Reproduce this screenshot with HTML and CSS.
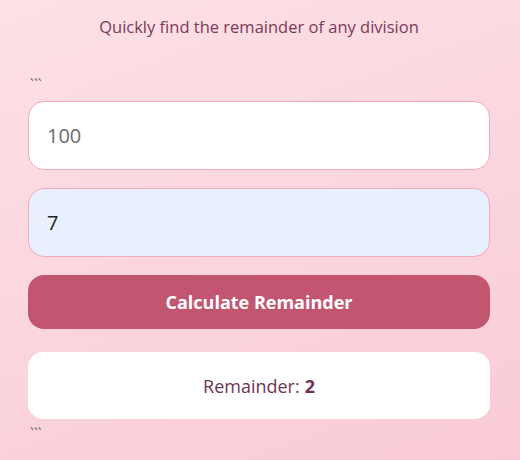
FILE: index.html
```html
<!DOCTYPE html>
<html lang="en">
<head>
  <meta charset="UTF-8">
  <meta name="viewport" content="width=device-width, initial-scale=1.0">
  <title>Remainder Calculator</title>
  <link rel="stylesheet" href="styles.css">
</head>
<body>
  <p class="subtitle">Quickly find the remainder of any division</p>

  <div class="fence">```</div>

  <form class="calc" id="calcForm">
    <input type="text" class="field" id="dividend" placeholder="100">
    <input type="text" class="field filled" id="divisor" value="7">
    <button type="submit" class="calc-button">Calculate Remainder</button>
  </form>

  <div class="result">Remainder: <strong>2</strong></div>

  <div class="fence">```</div>
</body>
</html>
```

FILE: styles.css
```css
html {
  min-height: 100%;
  background: linear-gradient(160deg, #fde1e7 0%, #f9cbd6 100%);
}
body {
  font-family: "Open Sans", "Noto Sans", Arial, sans-serif;
  margin: 0;
  padding: 14px 30px 0 28px;
  color: #7a3855;
}
.subtitle {
  margin: 0;
  text-align: center;
  font-size: 16.5px;
  line-height: 26px;
  color: #7d3a58;
}
.fence {
  margin: 37px 0 0 2px;
  font-size: 14px;
  line-height: 16px;
  height: 16px;
  color: #555;
}
.calc {
  display: flex;
  flex-direction: column;
  gap: 18px;
  margin-top: 8px;
}
.field {
  box-sizing: border-box;
  width: 100%;
  height: 69px;
  padding: 0 18px;
  border: 1px solid #f4a9be;
  border-radius: 16px;
  background: white;
  font-family: inherit;
  font-size: 20px;
  color: #222;
  outline: none;
}
.field::placeholder {
  color: #6b6b6b;
}
.filled {
  background-color: #e8f0fe;
}
.calc-button {
  height: 54px;
  border: none;
  border-radius: 16px;
  background-color: #c25671;
  color: white;
  font-family: inherit;
  font-size: 18px;
  font-weight: bold;
  cursor: pointer;
}
.result {
  margin-top: 23px;
  height: 67px;
  display: flex;
  align-items: center;
  justify-content: center;
  background: white;
  border-radius: 15px;
  font-size: 18px;
  color: #6f3452;
}
.result strong {
  margin-left: 5px;
}
.result + .fence {
  margin-top: 7px;
}
```
